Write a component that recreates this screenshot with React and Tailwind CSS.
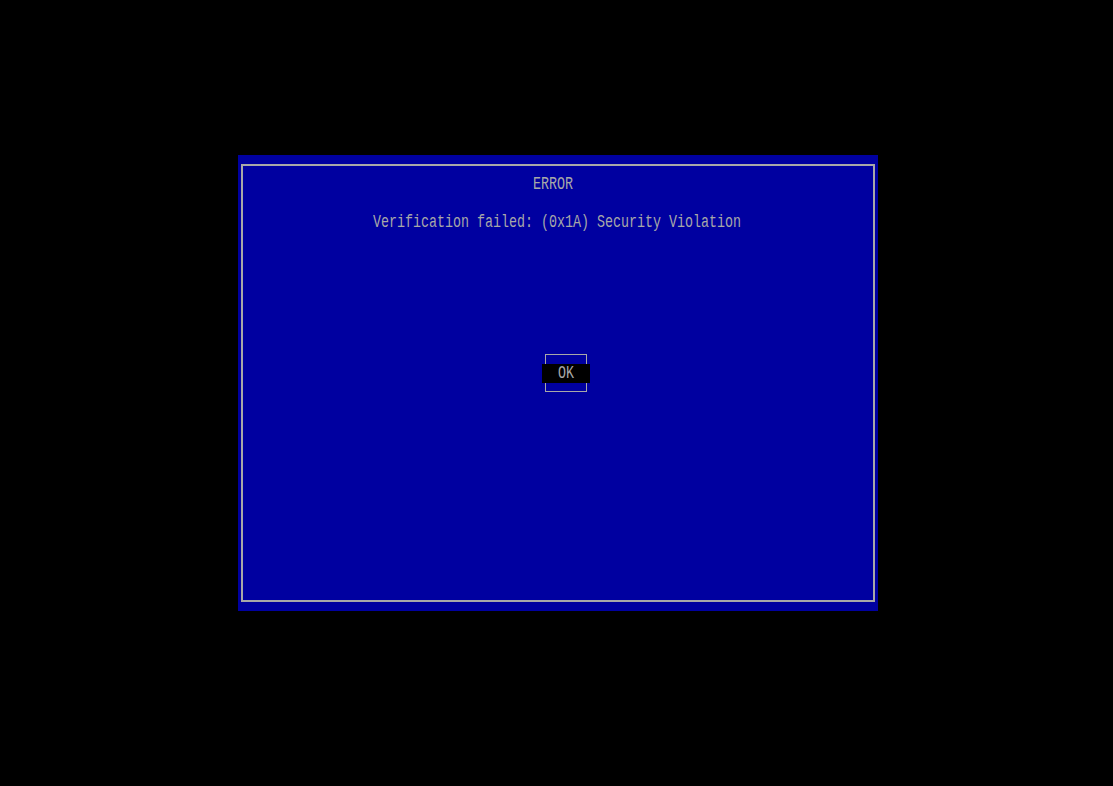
import React from 'react';

const fontStyle = "font-['Liberation_Mono','DejaVu_Sans_Mono',monospace] text-[18px] leading-[19px] text-[#a8a8a8]";

const Line = ({ children, className = '' }) => (
  <div className={`${fontStyle} h-[19px] whitespace-pre ${className}`}>
    <span className="inline-block origin-left scale-x-[0.7407]">{children}</span>
  </div>
);

const App = () => {
  return (
    <div className="min-h-screen w-full bg-black pt-[155px] pl-[238px]">
      <div className="w-[640px] h-[456px] bg-[#0000a0] pt-[9px] px-[3px] pb-[9px]">
        <div className="h-full border-2 border-[#a8a8a8]">
          <Line className="mt-[9px] ml-[290px]">ERROR</Line>
          <Line className="mt-[19px] ml-[130px]">Verification failed: (0x1A) Security Violation</Line>
          <div className="mt-[122px] ml-[302px] w-[42px] h-[38px] border border-[#a8a8a8] relative">
            <div className="absolute left-[-4px] top-[9px] w-[48px] h-[19px] bg-black flex justify-center">
              <div className={`${fontStyle} w-[16px] whitespace-pre`}>
                <span className="inline-block origin-left scale-x-[0.7407]">OK</span>
              </div>
            </div>
          </div>
        </div>
      </div>
    </div>
  );
};

export default App;
